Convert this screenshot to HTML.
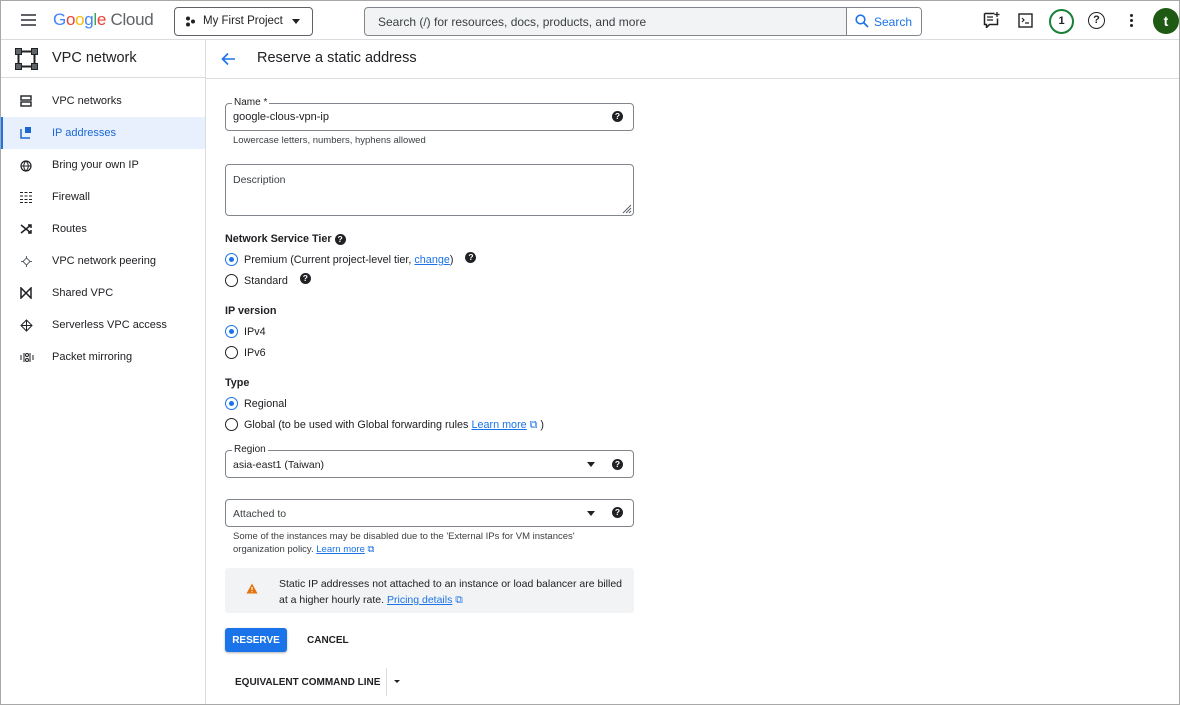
<!DOCTYPE html>
<html><head><meta charset="utf-8"><style>
*{box-sizing:border-box;margin:0;padding:0}
body{width:1180px;height:705px;overflow:hidden;font-family:"Liberation Sans",Arial,sans-serif;color:#202124;background:#fff;position:relative;font-size:11px}
.frame{position:absolute;inset:0;border:1px solid #a8a8a8;border-top:none;pointer-events:none;z-index:9}
.a{position:absolute}
.top{position:absolute;left:0;top:0;width:1180px;height:40px;border-bottom:1px solid #dadce0;border-top:1px solid #a8a8a8}
.side{position:absolute;left:0;top:40px;width:206px;height:665px;border-right:1px solid #dadce0}
.nav{position:absolute;left:0;width:205px;height:32px;line-height:32px;padding-left:52px;font-size:11px}
.nav svg{position:absolute;left:20px;top:10px}
.field{position:absolute;left:225px;width:409px;border:1px solid #80868b;border-radius:4px}
.lbl{position:absolute;top:-7px;left:6px;background:#fff;padding:0 2px;font-size:10px}
.radio{position:absolute;left:225px;width:13px;height:13px;border:1.5px solid #202124;border-radius:50%}
.radio.on{border-color:#1a73e8}
.radio.on::after{content:"";position:absolute;left:2.5px;top:2.5px;width:5px;height:5px;border-radius:50%;background:#1a73e8}
.rt{position:absolute;left:244px;font-size:10.8px}
.h{position:absolute;left:225px;font-size:10.8px;font-weight:bold;color:#202124}
.q{display:inline-block;width:11px;height:11px;border-radius:50%;background:#202124;color:#fff;font-size:8.5px;font-weight:bold;text-align:center;line-height:11px;vertical-align:middle}
a{color:#1a73e8;text-decoration:underline}
.caret{position:absolute;width:0;height:0;border-left:4.5px solid transparent;border-right:4.5px solid transparent;border-top:5px solid #202124}
</style></head><body>
<div class="frame"></div>
<div class="top">
 <div class="a" style="left:21px;top:13px;width:15px;height:2px;background:#5f6368;box-shadow:0 5px 0 #5f6368,0 10px 0 #5f6368"></div>
 <div class="a" style="left:53px;top:9px;font-size:17px;letter-spacing:-0.3px"><span style="color:#4285f4">G</span><span style="color:#ea4335">o</span><span style="color:#fbbc04">o</span><span style="color:#4285f4">g</span><span style="color:#34a853">l</span><span style="color:#ea4335">e</span><span style="color:#5f6368"> Cloud</span></div>
 <div class="a" style="left:174px;top:6px;width:139px;height:29px;border:1px solid #5f6368;border-radius:4px">
  <svg class="a" style="left:10px;top:8px" width="10" height="11"><circle cx="3" cy="2.5" r="2" fill="#202124"/><circle cx="3" cy="8.5" r="2" fill="#202124"/><circle cx="8" cy="5.5" r="2" fill="#202124"/></svg>
  <span class="a" style="left:28px;top:7px;font-size:11.5px">My First Project</span>
  <div class="caret" style="left:117px;top:11px"></div>
 </div>
 <div class="a" style="left:364px;top:6px;width:558px;height:29px;border:1px solid #80868b;border-radius:4px;background:#f1f3f4;overflow:hidden">
  <span class="a" style="left:13px;top:7px;font-size:12px;color:#3c4043">Search (/) for resources, docs, products, and more</span>
  <div class="a" style="right:0;top:0;width:75px;height:27px;background:#fff;border-left:1px solid #80868b">
   <svg class="a" style="left:8px;top:6px" width="14" height="14"><circle cx="5.5" cy="5.5" r="4.3" stroke="#1a73e8" stroke-width="1.6" fill="none"/><path d="M9 9l4 4" stroke="#1a73e8" stroke-width="1.8"/></svg>
   <span class="a" style="left:27px;top:7px;font-size:12px;color:#1a73e8">Search</span>
  </div>
 </div>
 <svg class="a" style="left:983px;top:11px" width="17" height="16"><path d="M1.5 1.5h10M1.5 1.5v11h2v3l3-3h8v-6" stroke="#202124" stroke-width="1.5" fill="none"/><path d="M4 5h6M4 8h6" stroke="#202124" stroke-width="1.3"/><path d="M14 0v5M11.5 2.5h5" stroke="#202124" stroke-width="1.3"/></svg>
 <svg class="a" style="left:1018px;top:12px" width="15" height="15"><rect x="1" y="1" width="13" height="13" stroke="#202124" stroke-width="1.4" fill="none"/><path d="M4 5l2 2-2 2M7 10h4" stroke="#202124" stroke-width="1.2" fill="none"/></svg>
 <div class="a" style="left:1049px;top:8px;width:25px;height:25px;border:2px solid #188038;border-radius:50%;text-align:center;line-height:21px;font-size:11px;font-weight:bold">1</div>
 <div class="a" style="left:1088px;top:11px;width:17px;height:17px;border:1.6px solid #202124;border-radius:50%;text-align:center;line-height:14px;font-size:11px;font-weight:bold">?</div>
 <div class="a" style="left:1130px;top:13px;width:3px;height:3px;background:#202124;border-radius:50%;box-shadow:0 5px 0 #202124,0 10px 0 #202124"></div>
 <div class="a" style="left:1153px;top:7px;width:26px;height:26px;background:#1e5a14;border-radius:50%;color:#fff;text-align:center;line-height:26px;font-size:14px;font-weight:bold">t</div>
</div>
<div class="side">
 <div class="a" style="left:0;top:0;width:205px;height:38px;border-bottom:1px solid #dadce0">
  <svg class="a" style="left:15px;top:8px" width="23" height="22"><rect x="1" y="1" width="5" height="5" fill="#5f6368"/><rect x="17" y="1" width="5" height="5" fill="#5f6368"/><rect x="1" y="16" width="5" height="5" fill="#5f6368"/><rect x="17" y="16" width="5" height="5" fill="#5f6368"/><path d="M3.5 6v10M19.5 6v10M6 3.5h11M6 18.5h11" stroke="#202124" stroke-width="2"/><rect x="0.5" y="0.5" width="6" height="6" fill="none" stroke="#202124"/><rect x="16.5" y="0.5" width="6" height="6" fill="none" stroke="#202124"/><rect x="0.5" y="15.5" width="6" height="6" fill="none" stroke="#202124"/><rect x="16.5" y="15.5" width="6" height="6" fill="none" stroke="#202124"/></svg>
  <span class="a" style="left:52px;top:10px;font-size:14.5px">VPC network</span>
 </div>
 <div class="nav" style="top:45px"><svg width="12" height="12"><rect x="1" y="1" width="10" height="4" fill="none" stroke="#202124" stroke-width="1.4"/><rect x="1" y="7" width="10" height="4" fill="none" stroke="#202124" stroke-width="1.4"/></svg>VPC networks</div>
 <div class="nav" style="top:77px;background:#e8f0fe;color:#1967d2;border-left:3px solid #1a73e8;padding-left:49px"><svg width="12" height="12" style="left:17px"><path d="M1 2v9h9" stroke="#1967d2" stroke-width="1.5" fill="none"/><rect x="5" y="0" width="6" height="6" fill="#1967d2"/></svg>IP addresses</div>
 <div class="nav" style="top:109px"><svg width="13" height="13"><circle cx="6" cy="7" r="5" stroke="#202124" stroke-width="1.2" fill="none"/><path d="M1 7h10M6 2c-3 3-3 7 0 10M6 2c3 3 3 7 0 10" stroke="#202124" fill="none"/></svg>Bring your own IP</div>
 <div class="nav" style="top:141px"><svg width="12" height="12"><path d="M0 1.5h12M0 5h12M0 8.5h12M0 11.5h12" stroke="#202124" stroke-dasharray="3 1.5"/></svg>Firewall</div>
 <div class="nav" style="top:173px"><svg width="12" height="12"><path d="M1 2l10 8M1 10l10-8M8 2h3v3M8 10h3v-3" stroke="#202124" stroke-width="1.5" fill="none"/></svg>Routes</div>
 <div class="nav" style="top:205px"><svg width="13" height="13"><path d="M6.5 1v3M6.5 9v3M1 6.5h3M9 6.5h3" stroke="#5f6368"/><rect x="4" y="4" width="5" height="5" transform="rotate(45 6.5 6.5)" fill="none" stroke="#5f6368"/></svg>VPC network peering</div>
 <div class="nav" style="top:237px"><svg width="12" height="12"><path d="M1 1v10l10-10v10z" stroke="#202124" stroke-width="1.5" fill="none"/></svg>Shared VPC</div>
 <div class="nav" style="top:269px"><svg width="13" height="13"><path d="M6.5 1l5.5 5.5-5.5 5.5-5.5-5.5z M1 6.5h11M6.5 1v11" stroke="#202124" fill="none"/></svg>Serverless VPC access</div>
 <div class="nav" style="top:301px"><svg width="14" height="13"><path d="M1 4v5M4 2v9M10 2v9M13 4v5" stroke="#202124"/><circle cx="7" cy="4" r="1.5" fill="none" stroke="#202124"/><circle cx="7" cy="9" r="1.5" fill="none" stroke="#202124"/></svg>Packet mirroring</div>
</div>
<div class="a" style="left:206px;top:40px;width:974px;height:39px;border-bottom:1px solid #dadce0">
 <svg class="a" style="left:15px;top:12px" width="15" height="14"><path d="M14 7H2M7 1.5L1.5 7 7 12.5" stroke="#1a73e8" stroke-width="1.6" fill="none"/></svg>
 <span class="a" style="left:51px;top:10px;font-size:14.5px">Reserve a static address</span>
</div>

<div class="field" style="top:103px;height:28px"><span class="lbl">Name *</span><span class="a" style="left:7px;top:7px;font-size:11px">google-clous-vpn-ip</span><span class="q a" style="left:386px;top:7px">?</span></div>
<div class="a" style="left:233px;top:135px;font-size:9.5px;color:#3c4043">Lowercase letters, numbers, hyphens allowed</div>
<div class="field" style="top:164px;height:52px"><span class="a" style="left:7px;top:9px;font-size:10.5px;color:#3c4043">Description</span>
 <svg class="a" style="left:396px;top:39px" width="10" height="10"><path d="M9 1L1 9M9 4L4 9M9 7L7 9" stroke="#5f6368"/></svg></div>

<div class="h" style="top:233px">Network Service Tier <span class="q">?</span></div>
<div class="radio on" style="top:253px"></div><div class="rt" style="top:254px">Premium (Current project-level tier, <a>change</a>) &nbsp; &nbsp;<span class="q" style="position:relative;top:-3px">?</span></div>
<div class="radio" style="top:274px"></div><div class="rt" style="top:275px">Standard &nbsp; &nbsp;<span class="q" style="position:relative;top:-3px">?</span></div>

<div class="h" style="top:305px">IP version</div>
<div class="radio on" style="top:325px"></div><div class="rt" style="top:326px">IPv4</div>
<div class="radio" style="top:346px"></div><div class="rt" style="top:347px">IPv6</div>

<div class="h" style="top:377px">Type</div>
<div class="radio on" style="top:397px"></div><div class="rt" style="top:398px">Regional</div>
<div class="radio" style="top:418px"></div><div class="rt" style="top:419px">Global (to be used with Global forwarding rules <a>Learn more</a> <span style="color:#1a73e8">⧉</span> )</div>

<div class="field" style="top:450px;height:28px"><span class="lbl">Region</span><span class="a" style="left:7px;top:8px;font-size:10.5px">asia-east1 (Taiwan)</span><div class="caret" style="left:361px;top:11px"></div><span class="q a" style="left:386px;top:8px">?</span></div>
<div class="field" style="top:499px;height:28px"><span class="a" style="left:7px;top:8px;font-size:10.5px;color:#3c4043">Attached to</span><div class="caret" style="left:361px;top:11px"></div><span class="q a" style="left:386px;top:7px">?</span></div>
<div class="a" style="left:233px;top:530px;font-size:9.5px;color:#3c4043;line-height:13px">Some of the instances may be disabled due to the 'External IPs for VM instances'<br>organization policy. <a>Learn more</a> <span style="color:#1a73e8">⧉</span></div>

<div class="a" style="left:225px;top:568px;width:409px;height:45px;background:#f1f3f4;border-radius:3px">
 <svg class="a" style="left:21px;top:15px" width="12" height="11"><path d="M6 0.5L11.5 10.5H0.5z" fill="#e8710a"/><path d="M6 4v3M6 8.3v1" stroke="#fff" stroke-width="1.2"/></svg>
 <div class="a" style="left:54px;top:8px;font-size:10.5px;line-height:16px">Static IP addresses not attached to an instance or load balancer are billed<br>at a higher hourly rate. <a>Pricing details</a> <span style="color:#1a73e8">⧉</span></div>
</div>

<div class="a" style="left:225px;top:628px;width:62px;height:24px;background:#1a73e8;border-radius:3px;color:#fff;font-weight:bold;font-size:10px;display:flex;align-items:center;justify-content:center;box-shadow:0 1px 2px rgba(0,0,0,.3)">RESERVE</div>
<div class="a" style="left:307px;top:635px;font-weight:bold;font-size:10px">CANCEL</div>
<div class="a" style="left:235px;top:677px;font-weight:bold;font-size:10px">EQUIVALENT COMMAND LINE</div>
<div class="a" style="left:386px;top:668px;width:1px;height:28px;background:#dadce0"></div>
<div class="caret" style="left:394px;top:680px;border-left-width:3.5px;border-right-width:3.5px;border-top-width:3.5px"></div>
</body></html>
